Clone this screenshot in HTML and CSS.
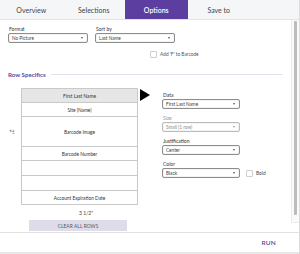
FILE: index.html
```html
<!DOCTYPE html>
<html>
<head>
<meta charset="utf-8">
<link rel="stylesheet" href="styles.css">
</head>
<body>
<div class="panel">
  <div class="tabs">
    <div class="tab">Overview</div>
    <div class="tab">Selections</div>
    <div class="tab active">Options</div>
    <div class="tab">Save to</div>
  </div>
  <div class="scroll">
    <div class="content">
      <div class="top-row">
        <div class="field">
          <div class="label">Format</div>
          <div class="select"><span>No Picture</span><i class="caret"></i></div>
        </div>
        <div class="field">
          <div class="label">Sort by</div>
          <div class="select"><span>Last Name</span><i class="caret"></i></div>
        </div>
      </div>
      <div class="check-row">
        <span class="checkbox"></span><span class="check-text">Add 'F' to Barcode</span>
      </div>
      <div class="section-head">
        <span class="section-title">Row Specifics</span><span class="section-line"></span>
      </div>
      <div class="main">
        <div class="left">
          <div class="table-wrap">
            <div class="height-label"><span>2"</span></div>
            <div class="card">
              <div class="row sel h14">First Last Name</div>
              <div class="row h14">Site (Name)</div>
              <div class="row h30">Barcode Image</div>
              <div class="row h14">Barcode Number</div>
              <div class="row h15"></div>
              <div class="row h15"></div>
              <div class="row h14">Account Expiration Date</div>
            </div>
            <div class="pointer"></div>
          </div>
          <div class="width-label">3 1/2"</div>
          <div class="btn-wrap"><div class="clear-btn">CLEAR ALL ROWS</div></div>
        </div>
        <div class="right">
          <div class="rfield">
            <div class="label">Data</div>
            <div class="select"><span>First Last Name</span><i class="caret"></i></div>
          </div>
          <div class="rfield disabled">
            <div class="label">Size</div>
            <div class="select"><span>Small (1 row)</span><i class="caret"></i></div>
          </div>
          <div class="rfield">
            <div class="label">Justification</div>
            <div class="select"><span>Center</span><i class="caret"></i></div>
          </div>
          <div class="rfield">
            <div class="label">Color</div>
            <div class="color-row">
              <div class="select"><span>Black</span><i class="caret"></i></div>
              <span class="checkbox"></span><span class="check-text bold-text">Bold</span>
            </div>
          </div>
        </div>
      </div>
    </div>
    <div class="vbar"><div class="thumb"></div></div>
  </div>
  <div class="footer"><span class="run">RUN</span></div>
</div>
</body>
</html>
```

FILE: styles.css
```css
* { box-sizing: border-box; }
html, body { margin: 0; padding: 0; background: #fff; }
body { font-family: Lato, "Open Sans", sans-serif; color: #333; width: 300px; height: 254px; overflow: hidden; }

.panel { width: 300px; height: 254px; display: flex; flex-direction: column; border-right: 1px solid #dcdcdc; }

.tabs { height: 20px; display: flex; background: #f5f6f8; border-bottom: 1px solid #e4e4e8; flex: none; }
.tab { width: 62.5px; height: 19px; display: flex; align-items: center; justify-content: center; font-size: 7px; color: #444; }
.tab.active { background: #5b3e9f; color: #fff; font-weight: 600; }

.scroll { height: 212px; display: flex; flex: none; overflow: hidden; }
.content { flex: 1; padding: 6px 0 0 8px; overflow: hidden; }
.vbar { width: 8px; height: 203px; background: #fafafa; border-left: 1px solid #ececec; border-bottom: 1px solid #ececec; padding: 1px 2px 0 2px; }
.thumb { width: 3px; height: 194px; background: #bcbcbc; border-radius: 1px; }

.top-row { display: flex; gap: 7px; }
.field { width: 80px; }
.label { font-size: 5px; color: #333; height: 7px; line-height: 7px; padding-left: 1px; }
.select { height: 10px; border: 1px solid #8d8d8d; border-radius: 2px; background: #fff; display: flex; align-items: center; justify-content: space-between; padding: 0 4px 0 3px; font-size: 4.7px; color: #444; box-shadow: 0 0 0 0.5px #e8e8e8 inset; }
.caret { width: 0; height: 0; border-left: 1.6px solid transparent; border-right: 1.6px solid transparent; border-top: 2px solid #555; }

.check-row { display: flex; align-items: center; margin: 7px 0 0 142px; height: 8px; }
.checkbox { width: 7px; height: 7px; border: 1px solid #cfcfcf; border-radius: 1px; background: #fff; flex: none; }
.check-text { font-size: 4.8px; color: #555; margin-left: 3px; }

.section-head { display: flex; align-items: center; margin-top: 12px; height: 8px; padding-right: 8px; }
.section-title { font-size: 6.2px; font-weight: 700; color: #5b4aa5; }
.section-line { flex: 1; height: 1px; background: #e4e1ee; margin-left: 5px; }

.main { display: flex; margin-top: 10px; }
.left { width: 142px; }
.table-wrap { display: flex; align-items: flex-start; }
.height-label { width: 13px; align-self: stretch; display: flex; align-items: center; justify-content: center; padding-bottom: 30px; padding-right: 4px; }
.height-label span { font-size: 5px; color: #555; transform: rotate(90deg); display: block; }
.card { width: 117px; border: 1px solid #c9c9c9; border-bottom-width: 0; }
.row { border-bottom: 1px solid #c9c9c9; display: flex; align-items: center; justify-content: center; font-size: 4.8px; color: #333; }
.row.sel { background: #e6e6e6; }
.h14 { height: 14px; }
.h15 { height: 15px; }
.h30 { height: 30px; }
.pointer { width: 0; height: 0; border-top: 6px solid transparent; border-bottom: 6px solid transparent; border-left: 10px solid #000; margin: 1px 0 0 2px; }

.width-label { font-size: 5px; color: #444; text-align: center; margin-top: 5px; padding-left: 13px; width: 143px; }
.btn-wrap { padding-left: 21px; margin-top: 4px; }
.clear-btn { width: 98px; height: 11px; background: #dedce9; color: #555; font-size: 4.8px; display: flex; align-items: center; justify-content: center; letter-spacing: 0.1px; }

.right { margin-left: 12px; padding-top: 4px; }
.rfield { margin-bottom: 6px; }
.rfield .select { width: 78px; }
.rfield.disabled .label { color: #999; }
.rfield.disabled .select { color: #888; border-color: #bbb; }
.rfield.disabled .caret { border-top-color: #999; }
.color-row { display: flex; align-items: center; }
.color-row .checkbox { margin-left: 6px; }
.bold-text { color: #444; }

.footer { flex: 1; border-top: 1px solid #e2e2e2; border-bottom: 2px solid #e8e8e8; display: flex; align-items: center; justify-content: flex-end; padding-right: 23px; }
.run { font-size: 6.5px; color: #5b3e9f; font-weight: 600; letter-spacing: 0.2px; }
```
